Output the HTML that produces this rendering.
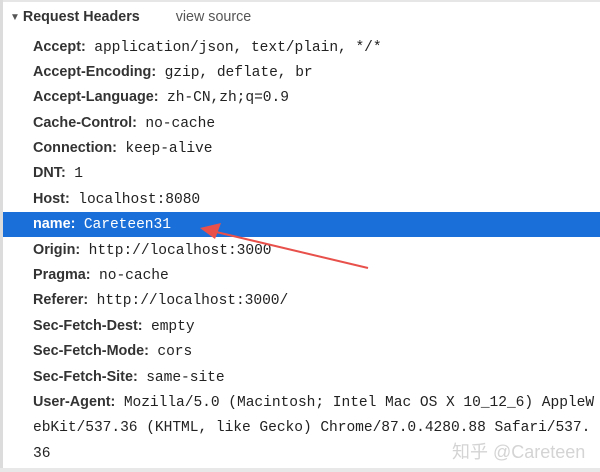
<!DOCTYPE html>
<html><head><meta charset="utf-8"><style>
html,body{margin:0;padding:0}
body{width:600px;height:472px;overflow:hidden;background:#fff;position:relative;font-family:"Liberation Sans",sans-serif}
.top{position:absolute;left:0;top:0;width:600px;height:2px;background:#e6e6e6}
.left{position:absolute;left:0;top:0;width:3px;height:472px;background:#dcdcdc}
.bot{position:absolute;left:0;top:468px;width:600px;height:4px;background:#e8e8e8}
.hdr{position:absolute;left:10px;top:8px;font-size:14.3px;font-weight:bold;color:#333;line-height:18px;white-space:pre}
.hdr .tri{font-size:10px;color:#555;margin-right:3px;position:relative;top:-1px}
.vs{font-weight:normal;color:#555;margin-left:36px}
.hl{position:absolute;left:3px;top:212px;width:597px;height:25px;background:#1b6fd8}
.rows{position:absolute;left:33px;top:33.5px;width:580px}
.r{height:25.4px;line-height:25.4px;white-space:pre;color:#222}
.r b{font-size:14.4px;color:#333;margin-right:4px}
.r span{font-family:"Liberation Mono",monospace;font-size:14.6px;letter-spacing:-0.05px;color:#222}
.r.sel b,.r.sel span{color:#fff}
.wm{position:absolute;left:452px;top:438px;font-size:18px;color:#d4d4d4;font-family:"Liberation Sans","Noto Sans CJK SC",sans-serif;white-space:pre}
svg{position:absolute;left:0;top:0}
</style></head><body>
<div class="top"></div><div class="left"></div>
<div class="hl"></div>
<div class="hdr"><span class="tri">▼</span>Request Headers<span class="vs">view source</span></div>
<div class="rows">
<div class="r"><b>Accept:</b> <span>application/json, text/plain, */*</span></div>
<div class="r"><b>Accept-Encoding:</b> <span>gzip, deflate, br</span></div>
<div class="r"><b>Accept-Language:</b> <span>zh-CN,zh;q=0.9</span></div>
<div class="r"><b>Cache-Control:</b> <span>no-cache</span></div>
<div class="r"><b>Connection:</b> <span>keep-alive</span></div>
<div class="r"><b>DNT:</b> <span>1</span></div>
<div class="r"><b>Host:</b> <span>localhost:8080</span></div>
<div class="r sel"><b>name:</b> <span>Careteen31</span></div>
<div class="r"><b>Origin:</b> <span>http://localhost:3000</span></div>
<div class="r"><b>Pragma:</b> <span>no-cache</span></div>
<div class="r"><b>Referer:</b> <span>http://localhost:3000/</span></div>
<div class="r"><b>Sec-Fetch-Dest:</b> <span>empty</span></div>
<div class="r"><b>Sec-Fetch-Mode:</b> <span>cors</span></div>
<div class="r"><b>Sec-Fetch-Site:</b> <span>same-site</span></div>
<div class="r"><b>User-Agent:</b> <span>Mozilla/5.0 (Macintosh; Intel Mac OS X 10_12_6) AppleW</span></div>
<div class="r"><span>ebKit/537.36 (KHTML, like Gecko) Chrome/87.0.4280.88 Safari/537.</span></div>
<div class="r"><span>36</span></div>
</div>
<div class="wm">知乎 @Careteen</div>
<div class="bot"></div>
<svg width="600" height="472"><line x1="368" y1="268" x2="212" y2="231" stroke="#e8514b" stroke-width="2"/><polygon points="200,228 221,223 215,239" fill="#e8514b"/></svg>
</body></html>
